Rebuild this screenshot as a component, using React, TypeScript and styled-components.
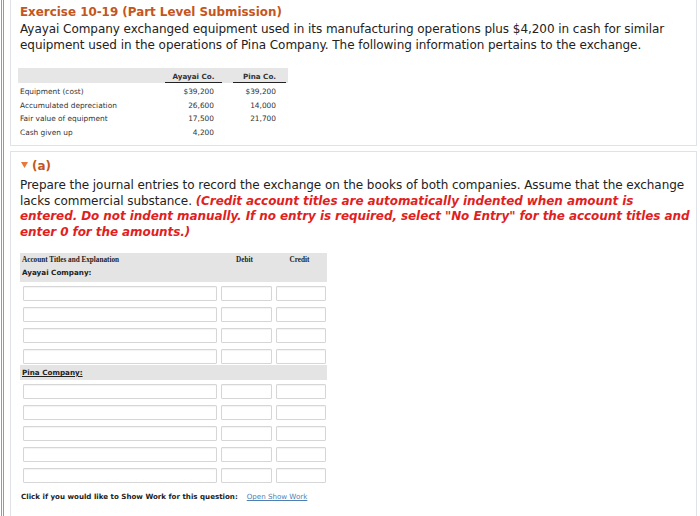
import React from "react";
import styled, { createGlobalStyle } from "styled-components";

const Global = createGlobalStyle`
  html, body { margin: 0; padding: 0; background: #fff; }
  body { font-family: Verdana, "DejaVu Sans", sans-serif; color: #222; }
`;

const Page = styled.div`
  padding-left: 1px;
  height: 516px;
  overflow: hidden;
`;

const Rail = styled.div`
  border-left: 3px double #9a9a9a;
  height: 100%;
  padding-left: 6px;
  padding-right: 3px;
  display: flex;
  flex-direction: column;
  gap: 5px;
`;

const Panel = styled.section<{ $top?: boolean }>`
  border: 1px solid #dfe2e8;
  border-top: ${(p) => (p.$top ? "none" : "1px solid #dfe2e8")};
  padding: ${(p) => (p.$top ? "4px 6px 0 9px" : "6px 6px 0 8px")};
  height: ${(p) => (p.$top ? "141px" : "auto")};
  min-height: ${(p) => (p.$top ? "0" : "400px")};
  flex: none;
`;

const Title = styled.h1`
  margin: 0;
  font-size: 11.9px;
  font-weight: bold;
  color: #c4561d;
  line-height: 16px;
`;

const Prose = styled.p`
  margin: 1px 0 0 0;
  font-size: 12px;
  letter-spacing: -0.05px;
  line-height: 16px;
  color: #222;
`;

const Info = styled.div`
  margin-top: 15px;
  margin-left: -2px;
  width: 270px;
  font-size: 7.4px;
  color: #333;
`;

const InfoHead = styled.div`
  display: grid;
  grid-template-columns: 147px 57px 11px 53px;
  background: #e6e6e6;
  height: 15px;
  align-items: end;
`;

const ColHead = styled.div`
  font-weight: bold;
  text-align: center;
  border-bottom: 1px solid #222;
  padding-bottom: 1px;
  font-size: 7.2px;
`;

const InfoRow = styled.div`
  display: grid;
  grid-template-columns: 147px 49px 62px;
  height: 13.5px;
  align-items: center;
  &:nth-child(2) { margin-top: 2px; }
`;

const Label = styled.div`
  padding-left: 2px;
`;

const Num = styled.div`
  text-align: right;
`;

const PartHead = styled.div`
  display: flex;
  align-items: center;
  gap: 4px;
  color: #c4561d;
  font-weight: bold;
  font-size: 11.9px;
  line-height: 16px;
  padding-left: 2px;
`;

const Tri = styled.svg`
  width: 7px;
  height: 6px;
  margin-top: -3px;
`;

const Instr = styled.p`
  margin: 4px 0 0 1px;
  font-size: 12px;
  letter-spacing: -0.05px;
  line-height: 15.5px;
  color: #222;
`;

const Red = styled.em`
  color: #e11f1f;
  font-weight: bold;
  letter-spacing: -0.08px;
`;

const Journal = styled.div`
  margin-top: 13px;
  margin-left: 1px;
  width: 307px;
`;

const Band = styled.div`
  background: #e4e4e4;
  display: grid;
  grid-template-columns: 197px 55px 55px;
  padding-top: 3px;
`;

const SerifHead = styled.div<{ $center?: boolean }>`
  font-family: "Liberation Serif", "Times New Roman", serif;
  font-weight: bold;
  font-size: 7.2px;
  color: #222;
  text-align: ${(p) => (p.$center ? "center" : "left")};
  padding-left: ${(p) => (p.$center ? "0" : "2px")};
  line-height: 9px;
`;

const Company = styled.div<{ $underline?: boolean; $tall?: boolean }>`
  grid-column: 1 / span 3;
  font-weight: bold;
  font-size: 7.2px;
  padding: ${(p) => (p.$tall ? "3px 0 5px 2px" : "3px 0 3px 2px")};
  line-height: 9px;
  text-decoration: ${(p) => (p.$underline ? "underline" : "none")};
  color: #222;
`;

const CompanyBand = styled(Band)`
  padding-top: 0;
  margin-top: 0;
`;

const Rows = styled.div`
  display: flex;
  flex-direction: column;
  gap: 6px;
  padding: 4px 0 1px 3px;
`;

const Row = styled.div`
  display: grid;
  grid-template-columns: 194px 51px 50px;
  column-gap: 4px;
`;

const Field = styled.input`
  box-sizing: border-box;
  height: 15px;
  border: 1px solid #d6d6d6;
  border-radius: 1px;
  box-shadow: inset 0 1px 1px rgba(0, 0, 0, 0.05);
  background: #fff;
  padding: 0;
  margin: 0;
  width: 100%;
`;

const Footer = styled.div`
  margin-top: 8px;
  margin-left: 2px;
  display: flex;
  gap: 9px;
  font-size: 7.1px;
  align-items: center;
`;

const FooterLabel = styled.span`
  font-weight: bold;
  color: #222;
`;

const Link = styled.a`
  color: #4d7fb5;
  text-decoration: underline;
`;

const info = [
  ["Equipment (cost)", "$39,200", "$39,200"],
  ["Accumulated depreciation", "26,600", "14,000"],
  ["Fair value of equipment", "17,500", "21,700"],
  ["Cash given up", "4,200", ""],
];

const EntryRows = ({ n }: { n: number }) => (
  <Rows>
    {Array.from({ length: n }).map((_, i) => (
      <Row key={i}>
        <Field />
        <Field />
        <Field />
      </Row>
    ))}
  </Rows>
);

export default function App() {
  return (
    <>
      <Global />
      <Page>
        <Rail>
          <Panel $top>
            <Title>Exercise 10-19 (Part Level Submission)</Title>
            <Prose>
              Ayayai Company exchanged equipment used in its manufacturing operations plus $4,200 in cash for similar
              equipment used in the operations of Pina Company. The following information pertains to the exchange.
            </Prose>
            <Info>
              <InfoHead>
                <div />
                <ColHead>Ayayai Co.</ColHead>
                <div />
                <ColHead>Pina Co.</ColHead>
              </InfoHead>
              {info.map((r) => (
                <InfoRow key={r[0]}>
                  <Label>{r[0]}</Label>
                  <Num>{r[1]}</Num>
                  <Num>{r[2]}</Num>
                </InfoRow>
              ))}
            </Info>
          </Panel>
          <Panel>
            <PartHead>
              <Tri viewBox="0 0 7 6">
                <path d="M0 0 H7 L3.5 6 Z" fill="#e8793a" />
              </Tri>
              (a)
            </PartHead>
            <Instr>
              Prepare the journal entries to record the exchange on the books of both companies. Assume that the exchange
              lacks commercial substance.{" "}
              <Red>
                (Credit account titles are automatically indented when amount is entered. Do not indent manually. If no
                entry is required, select "No Entry" for the account titles and enter 0 for the amounts.)
              </Red>
            </Instr>
            <Journal>
              <Band>
                <SerifHead>Account Titles and Explanation</SerifHead>
                <SerifHead $center>Debit</SerifHead>
                <SerifHead $center>Credit</SerifHead>
                <Company $tall>Ayayai Company:</Company>
              </Band>
              <EntryRows n={4} />
              <CompanyBand>
                <Company $underline>Pina Company:</Company>
              </CompanyBand>
              <EntryRows n={5} />
            </Journal>
            <Footer>
              <FooterLabel>Click if you would like to Show Work for this question:</FooterLabel>
              <Link href="#">Open Show Work</Link>
            </Footer>
          </Panel>
        </Rail>
      </Page>
    </>
  );
}
